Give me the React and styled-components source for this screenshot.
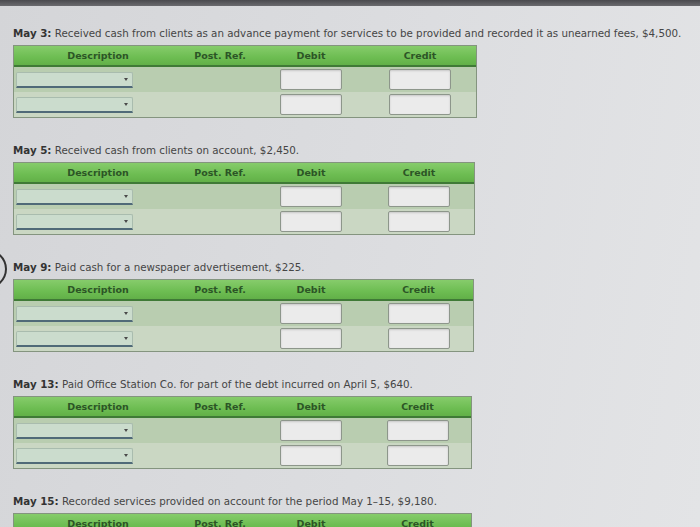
import React from "react";
import styled, { createGlobalStyle } from "styled-components";

const GlobalStyle = createGlobalStyle`
  html, body {
    margin: 0;
    padding: 0;
    background: #d9dadd;
  }
  body {
    font-family: "DejaVu Sans", Verdana, sans-serif;
    overflow: hidden;
  }
`;

const Page = styled.div`
  width: 700px;
  height: 527px;
  position: relative;
  overflow: hidden;
  background: linear-gradient(100deg, #d4d5d8 0%, #dcdde0 55%, #e3e4e6 100%);
`;

const TopBand = styled.div`
  height: 6px;
  background: linear-gradient(180deg, #4a4a4e, #6a6a6e);
`;

const Content = styled.div`
  padding: 20px 0 0 13px;
  display: flex;
  flex-direction: column;
  gap: 25px;
`;

const Section = styled.section`
  position: relative;
  display: flex;
  flex-direction: column;
  gap: 5px;
`;

const Title = styled.div`
  font-size: 10.3px;
  line-height: 14px;
  color: #454545;
  white-space: nowrap;
  b {
    color: #333;
  }
`;

const Arc = styled.div`
  position: absolute;
  left: -48px;
  top: -11px;
  width: 38px;
  height: 36px;
  border: 2px solid #333;
  border-radius: 50%;
`;

const Table = styled.div`
  width: ${(p) => p.$width}px;
  border: 1px solid #84947f;
  display: grid;
  grid-template-columns: 168px 76px 106px 1fr;
`;

const Head = styled.div`
  height: 19px;
  background: linear-gradient(180deg, #86cc6b 0%, #6dbd52 60%, #62b048 100%);
  border-bottom: 2px solid #3f7a36;
  color: #2c5526;
  font-weight: bold;
  font-size: 9.5px;
  display: flex;
  align-items: center;
  justify-content: center;
`;

const Cell = styled.div`
  height: 25px;
  background: ${(p) => (p.$alt ? "#cad7c3" : "#b9cdb0")};
  display: flex;
  align-items: center;
  justify-content: ${(p) => (p.$left ? "flex-start" : "center")};
  padding-left: ${(p) => (p.$left ? "2px" : "0")};
`;

const Select = styled.div`
  width: 115px;
  height: 13px;
  background: #cbdccd;
  border: 1px solid #a9bcae;
  border-bottom: 2px solid #506a78;
  border-radius: 2px 2px 0 0;
  position: relative;
  &::after {
    content: "";
    position: absolute;
    right: 4px;
    top: 5px;
    border-left: 2.5px solid transparent;
    border-right: 2.5px solid transparent;
    border-top: 3px solid #4a4a4a;
  }
`;

const Input = styled.div`
  width: 60px;
  height: 19px;
  background: #ebebeb;
  border: 1px solid #8d968b;
  border-radius: 2px;
  box-shadow: inset 0 1px 2px rgba(0, 0, 0, 0.15);
`;

const entries = [
  {
    day: "May 3:",
    text: "Received cash from clients as an advance payment for services to be provided and recorded it as unearned fees, $4,500.",
    width: 462,
  },
  { day: "May 5:", text: "Received cash from clients on account, $2,450.", width: 460 },
  { day: "May 9:", text: "Paid cash for a newspaper advertisement, $225.", width: 459, arc: true },
  {
    day: "May 13:",
    text: "Paid Office Station Co. for part of the debt incurred on April 5, $640.",
    width: 457,
  },
  {
    day: "May 15:",
    text: "Recorded services provided on account for the period May 1–15, $9,180.",
    width: 457,
  },
];

const Journal = ({ width }) => (
  <Table $width={width}>
    <Head>Description</Head>
    <Head>Post. Ref.</Head>
    <Head>Debit</Head>
    <Head>Credit</Head>
    {[false, true].map((alt) => (
      <React.Fragment key={String(alt)}>
        <Cell $alt={alt} $left>
          <Select />
        </Cell>
        <Cell $alt={alt} />
        <Cell $alt={alt}>
          <Input />
        </Cell>
        <Cell $alt={alt}>
          <Input />
        </Cell>
      </React.Fragment>
    ))}
  </Table>
);

export default function App() {
  return (
    <Page>
      <GlobalStyle />
      <TopBand />
      <Content>
        {entries.map((e) => (
          <Section key={e.day}>
            {e.arc && <Arc />}
            <Title>
              <b>{e.day}</b> {e.text}
            </Title>
            <Journal width={e.width} />
          </Section>
        ))}
      </Content>
    </Page>
  );
}
